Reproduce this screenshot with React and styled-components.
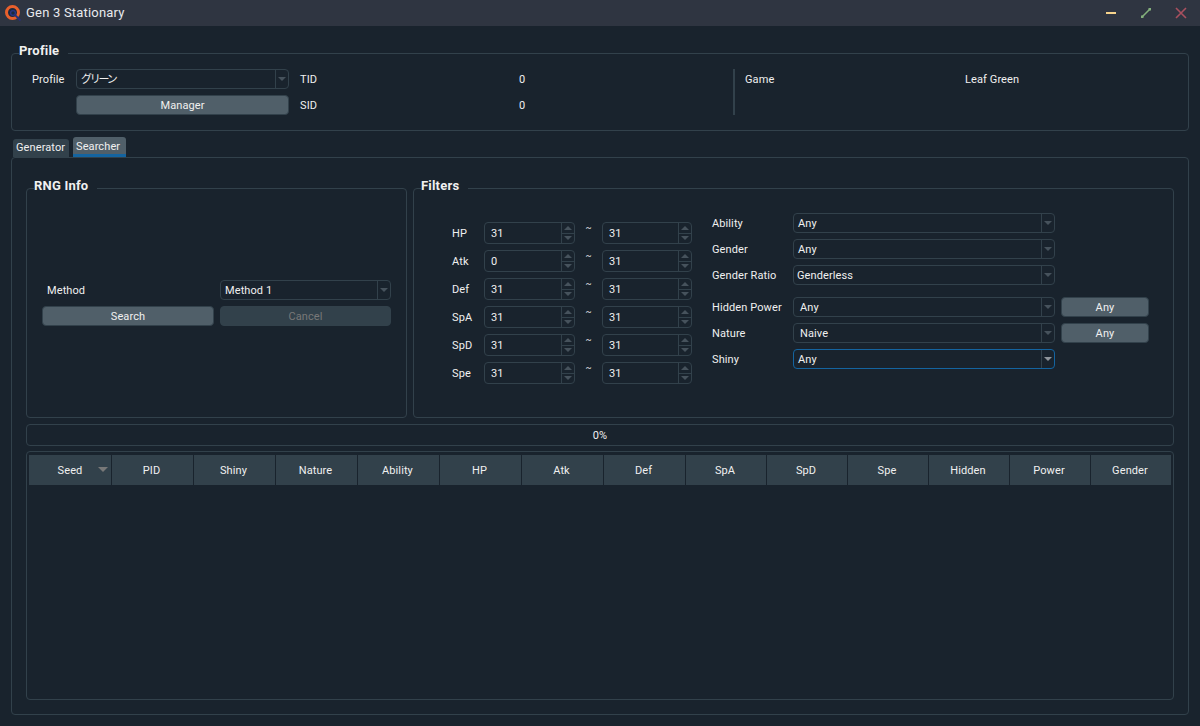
// App.jsx
import React from "react";
import styled, { createGlobalStyle } from "styled-components";

const GlobalStyle = createGlobalStyle`
  html, body {
    margin: 0;
    background-color: #19232d;
  }
  * {
    box-sizing: border-box;
  }
`;

const Window = styled.div`
  width: 1200px;
  height: 726px;
  overflow: hidden;
  display: flex;
  flex-direction: column;
  background-color: #19232d;
  color: #f0f0f0;
  font-family: Roboto, "Noto Sans CJK JP", sans-serif;
  font-size: 11px;
  line-height: 22px;
  letter-spacing: 0.1px;
`;

const TitleBar = styled.header`
  height: 26px;
  flex: none;
  display: flex;
  align-items: center;
  padding-left: 5px;
  background-color: #2f3541;
`;

const WindowTitle = styled.span`
  margin-left: 4px;
  font-size: 13px;
  letter-spacing: 0.2px;
  flex: 1;
  color: #e8eaee;
`;

const WindowControls = styled.div`
  display: flex;
  align-items: center;
  gap: 23px;
  padding-right: 13px;
`;

const Content = styled.main`
  flex: 1;
  padding: 0 11px;
`;

const Group = styled.fieldset`
  margin: 0;
  padding: 0;
  min-width: 0;
  border: 1px solid #32414b;
  border-radius: 4px;
`;

const Legend = styled.legend`
  margin-left: 7px;
  padding: 0 9px 0 0;
  height: 16px;
  line-height: 12px;
  font-size: 13px;
  font-weight: 700;
  letter-spacing: 0.2px;
`;

const ProfileGroup = styled(Group)`
  margin-top: 19px;
  height: 86px;
`;

const ProfileGrid = styled.div`
  display: grid;
  grid-template-columns: 44px 213px 230px 214px 12px 220px 1fr;
  grid-auto-rows: 20px;
  row-gap: 6px;
  padding: 8px 0 0 20px;
`;

const TidLabel = styled.span`
  padding-left: 11px;
`;

const Divider = styled.div`
  grid-column: 5;
  grid-row: 1 / span 2;
  width: 2px;
  background-color: #32414b;
`;

const KanaText = styled.span`
  letter-spacing: -2.2px;
`;

const ComboBox = styled.div`
  position: relative;
  height: 20px;
  padding-left: ${(p) => p.$inset ?? 4}px;
  border: 1px solid ${(p) => (p.$focused ? "#1464a0" : "#32414b")};
  border-radius: 4px;
  line-height: 20px;
  white-space: nowrap;

  &::before {
    content: "";
    position: absolute;
    top: 0;
    bottom: 0;
    right: 12px;
    width: 1px;
    background-color: #32414b;
  }

  &::after {
    content: "";
    position: absolute;
    top: 7px;
    right: 2px;
    border-style: solid;
    border-width: 4px 4px 0;
    border-color: ${(p) => (p.$focused ? "#8f959b" : "#46525c")} transparent transparent;
  }
`;

const PushButton = styled.div`
  height: 20px;
  line-height: 20px;
  text-align: center;
  border: 1px solid #32414b;
  border-radius: 4px;
  background-color: ${(p) => (p.$disabled ? "#32414b" : "#505f69")};
  color: ${(p) => (p.$disabled ? "#787878" : "#f0f0f0")};
`;

const TabBar = styled.div`
  margin-top: 6px;
  height: 20px;
  display: flex;
  align-items: flex-end;
  gap: 4px;
  padding-left: 2px;
`;

const Tab = styled.div`
  width: ${(p) => p.$width}px;
  height: ${(p) => (p.$active ? 20 : 18)}px;
  padding-left: 3px;
  line-height: ${(p) => (p.$active ? 19 : 17)}px;
  border-radius: 3px 3px 0 0;
  background-color: ${(p) => (p.$active ? "#505f69" : "#32414b")};
  border-bottom: ${(p) => (p.$active ? "3px solid #1464a0" : "none")};
`;

const TabPane = styled.section`
  height: 558px;
  padding: 22px 14px 0;
  border: 1px solid #32414b;
  border-radius: 4px;
`;

const TopRow = styled.div`
  display: flex;
  gap: 6px;
  height: 238px;
`;

const RngGroup = styled(Group)`
  width: 381px;
`;

const FilterGroup = styled(Group)`
  flex: 1;
`;

const RngGrid = styled.div`
  display: grid;
  grid-template-columns: 172px 171px;
  grid-auto-rows: 20px;
  gap: 6px;
  padding: 84px 0 0 15px;
`;

const MethodLabel = styled.span`
  padding-left: 5px;
`;

const FilterColumns = styled.div`
  display: flex;
  align-items: flex-start;
`;

const IvGrid = styled.div`
  display: grid;
  grid-template-columns: 32px 91px 27px 90px;
  grid-auto-rows: 22px;
  row-gap: 6px;
  margin: 26px 0 0 38px;
  line-height: 24px;
`;

const Tilde = styled.span`
  text-align: center;
  font-size: 9px;
  line-height: 12px;
`;

const SpinBox = styled.div`
  position: relative;
  padding-left: 6px;
  border: 1px solid #32414b;
  border-radius: 4px;
  line-height: 22px;

  &::before {
    content: "";
    position: absolute;
    top: 0;
    bottom: 0;
    right: 12px;
    width: 1px;
    background-color: #32414b;
  }
`;

const SpinButtons = styled.div`
  position: absolute;
  top: 0;
  right: 0;
  bottom: 0;
  width: 12px;
  display: flex;
  flex-direction: column;
`;

const SpinButton = styled.div`
  flex: 1;
  display: flex;
  align-items: center;
  justify-content: center;
  border-top: ${(p) => (p.$down ? "1px solid #32414b" : "none")};

  &::after {
    content: "";
    border-style: solid;
    border-color: transparent;
    border-width: ${(p) => (p.$down ? "4px 4px 0" : "0 4px 4px")};
    ${(p) => (p.$down ? "border-top-color" : "border-bottom-color")}: #46525c;
  }
`;

const ChoiceList = styled.div`
  margin: 17px 0 0 20px;
`;

const ChoiceRow = styled.div`
  display: grid;
  grid-template-columns: 81px 262px 94px;
  height: 20px;
  margin-top: ${(p) => (p.$first ? 0 : p.$spaced ? 12 : 6)}px;
`;

const ChoiceButton = styled(PushButton)`
  margin-left: 6px;
`;

const ProgressBar = styled.div`
  margin-top: 6px;
  height: 22px;
  border: 1px solid #32414b;
  border-radius: 4px;
  text-align: center;
  line-height: 21px;
`;

const ResultTable = styled.div`
  margin-top: 5px;
  height: 249px;
  padding: 3px 2px;
  border: 1px solid #32414b;
  border-radius: 4px;
`;

const TableHeader = styled.div`
  display: grid;
  grid-template-columns: 83px repeat(7, 82px) repeat(5, 81px) 80px;
  grid-template-rows: 30px;
  height: 30px;
`;

const HeaderCell = styled.div`
  position: relative;
  line-height: 31px;
  text-align: center;
  background-color: #32414b;
  border-right: 1px solid #19232d;
  padding-right: ${(p) => (p.$sorted ? 0 : 2)}px;

  &:last-child {
    border-right: none;
  }
`;

const SortArrow = styled.span`
  position: absolute;
  top: 12px;
  right: 3px;
  border-style: solid;
  border-width: 5px 5px 0;
  border-color: #787878 transparent transparent;
`;

const ivRows = [
  ["HP", 31, 31],
  ["Atk", 0, 31],
  ["Def", 31, 31],
  ["SpA", 31, 31],
  ["SpD", 31, 31],
  ["Spe", 31, 31],
];

const columns = ["Seed", "PID", "Shiny", "Nature", "Ability", "HP", "Atk", "Def", "SpA", "SpD", "Spe", "Hidden", "Power", "Gender"];

const Logo = () => (
  <svg width="17" height="17" viewBox="0 0 17 17">
    <circle cx="7.5" cy="7.5" r="6" fill="#1c2a40" stroke="#e8602c" strokeWidth="3" />
    <circle cx="8" cy="8" r="2.4" fill="none" stroke="#2a3688" strokeWidth="1.3" />
    <path d="M10 10 L15.5 15.5" stroke="#2c2f78" strokeWidth="1.8" />
  </svg>
);

const Minimize = () => (
  <svg width="12" height="12" viewBox="0 0 12 12">
    <rect x="1" y="5" width="10" height="2" fill="#f6d38c" />
  </svg>
);

const Maximize = () => (
  <svg width="12" height="12" viewBox="0 0 12 12">
    <path d="M2 10 L10 2" stroke="#84b07c" strokeWidth="1.6" />
    <rect x="1" y="8.5" width="2.5" height="2.5" fill="#84b07c" />
    <rect x="8.5" y="1" width="2.5" height="2.5" fill="#84b07c" />
  </svg>
);

const Close = () => (
  <svg width="12" height="12" viewBox="0 0 12 12">
    <path d="M1 1 L11 11 M11 1 L1 11" stroke="#a9505f" strokeWidth="1.6" />
  </svg>
);

const Spin = ({ value }) => (
  <SpinBox>
    {value}
    <SpinButtons>
      <SpinButton />
      <SpinButton $down />
    </SpinButtons>
  </SpinBox>
);

const App = () => {
  return (
    <Window>
      <GlobalStyle />
      <TitleBar>
        <Logo />
        <WindowTitle>Gen 3 Stationary</WindowTitle>
        <WindowControls>
          <Minimize />
          <Maximize />
          <Close />
        </WindowControls>
      </TitleBar>

      <Content>
        <ProfileGroup>
          <Legend>Profile</Legend>
          <ProfileGrid>
            <span>Profile</span>
            <ComboBox><KanaText>グリーン</KanaText></ComboBox>
            <TidLabel>TID</TidLabel>
            <span>0</span>
            <Divider />
            <span>Game</span>
            <span>Leaf Green</span>
            <span />
            <PushButton>Manager</PushButton>
            <TidLabel>SID</TidLabel>
            <span>0</span>
          </ProfileGrid>
        </ProfileGroup>

        <TabBar>
          <Tab $width={56}>Generator</Tab>
          <Tab $width={53} $active>Searcher</Tab>
        </TabBar>

        <TabPane>
          <TopRow>
            <RngGroup>
              <Legend>RNG Info</Legend>
              <RngGrid>
                <MethodLabel>Method</MethodLabel>
                <ComboBox>Method 1</ComboBox>
                <PushButton>Search</PushButton>
                <PushButton $disabled>Cancel</PushButton>
              </RngGrid>
            </RngGroup>

            <FilterGroup>
              <Legend>Filters</Legend>
              <FilterColumns>
                <IvGrid>
                  {ivRows.map(([name, min, max]) => (
                    <React.Fragment key={name}>
                      <span>{name}</span>
                      <Spin value={min} />
                      <Tilde>~</Tilde>
                      <Spin value={max} />
                    </React.Fragment>
                  ))}
                </IvGrid>

                <ChoiceList>
                  <ChoiceRow $first>
                    <span>Ability</span>
                    <ComboBox>Any</ComboBox>
                  </ChoiceRow>
                  <ChoiceRow>
                    <span>Gender</span>
                    <ComboBox>Any</ComboBox>
                  </ChoiceRow>
                  <ChoiceRow>
                    <span>Gender Ratio</span>
                    <ComboBox $inset={3}>Genderless</ComboBox>
                  </ChoiceRow>
                  <ChoiceRow $spaced>
                    <span>Hidden Power</span>
                    <ComboBox $inset={6}>Any</ComboBox>
                    <ChoiceButton>Any</ChoiceButton>
                  </ChoiceRow>
                  <ChoiceRow>
                    <span>Nature</span>
                    <ComboBox $inset={6}>Naive</ComboBox>
                    <ChoiceButton>Any</ChoiceButton>
                  </ChoiceRow>
                  <ChoiceRow>
                    <span>Shiny</span>
                    <ComboBox $focused>Any</ComboBox>
                  </ChoiceRow>
                </ChoiceList>
              </FilterColumns>
            </FilterGroup>
          </TopRow>

          <ProgressBar>0%</ProgressBar>

          <ResultTable>
            <TableHeader>
              {columns.map((name, i) => (
                <HeaderCell key={name} $sorted={i === 0}>
                  {name}
                  {i === 0 && <SortArrow />}
                </HeaderCell>
              ))}
            </TableHeader>
          </ResultTable>
        </TabPane>
      </Content>
    </Window>
  );
};

export default App;
